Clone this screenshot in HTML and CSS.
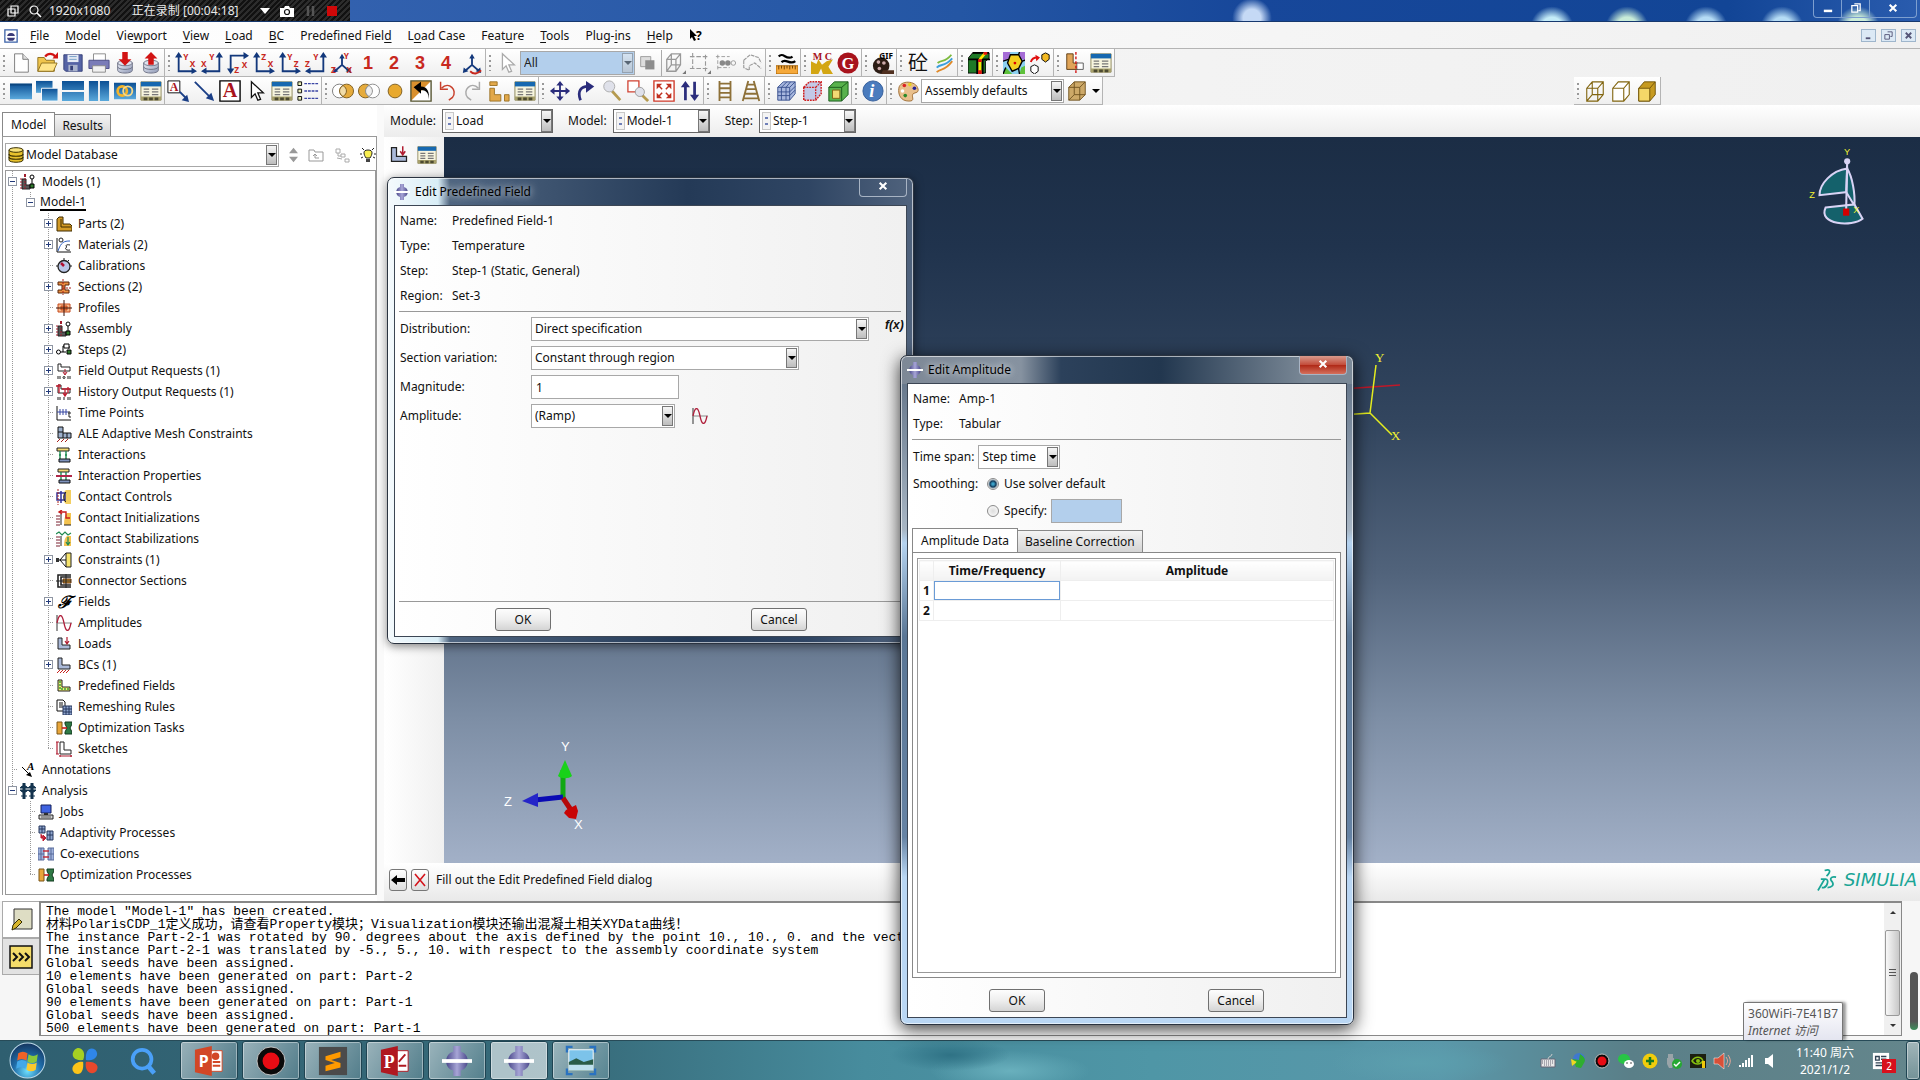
FILE: index.html
```html
<!DOCTYPE html>
<html lang="en">
<head>
  <meta charset="UTF-8">
  <title>Edit Amplitude - Model-1</title>
  <meta name="viewport" content="width=device-width, initial-scale=1.0">
  <link rel="stylesheet" href="styles.css">
</head>
<body>

  <!-- icon sprite -->
  <svg class="sprite" aria-hidden="true">
    <defs>
      <linearGradient id="g-blue" x1="0" y1="0" x2="0" y2="1"><stop offset="0" stop-color="#0b4f94"/><stop offset="1" stop-color="#5aa9dc"/></linearGradient>
      <linearGradient id="g-gold" x1="0" y1="0" x2="1" y2="1"><stop offset="0" stop-color="#fff0a0"/><stop offset="1" stop-color="#c89a1c"/></linearGradient>
      <linearGradient id="g-steel" x1="0" y1="0" x2="1" y2="1"><stop offset="0" stop-color="#eef1f8"/><stop offset="1" stop-color="#8c96b4"/></linearGradient>
      <linearGradient id="g-violet" x1="0" y1="0" x2="1" y2="0"><stop offset="0" stop-color="#4c4a8c"/><stop offset=".5" stop-color="#a7a5d6"/><stop offset="1" stop-color="#4c4a8c"/></linearGradient>
      <radialGradient id="g-orb" cx=".5" cy=".8" r=".8"><stop offset="0" stop-color="#6ee0ff"/><stop offset=".5" stop-color="#1f6ca8"/><stop offset="1" stop-color="#15355e"/></radialGradient>
    </defs>

    <!-- toolbar, row one -->
    <symbol id="i-new" viewBox="0 0 24 24"><path d="M5 2h9l6 6v14H5z" fill="#fff" stroke="#777"/><path d="M14 2v6h6" fill="#ddd" stroke="#777"/></symbol>
    <symbol id="i-open" viewBox="0 0 24 24"><path d="M2 21V6h7l2 3h9v12z" fill="#f0c54c" stroke="#8c6d1d"/><path d="M2 21l4-9h17l-4 9z" fill="#ffe58a" stroke="#8c6d1d"/><path d="M10 5c3-4 8-4 11 0" fill="none" stroke="#d21414" stroke-width="2.5"/><path d="M18 7h6V0z" fill="#d21414"/></symbol>
    <symbol id="i-save" viewBox="0 0 24 24"><path d="M2 3h20v18H4l-2-2z" fill="#5563a5" stroke="#343f78"/><path d="M6 3h12v8H6z" fill="#e6ebf5"/><path d="M8 5h8M8 8h8" stroke="#6d9ac4"/><path d="M7 14h10v7H7z" fill="#aab3cc"/><path d="M9 15h3v5H9z" fill="#343f78"/></symbol>
    <symbol id="i-print" viewBox="0 0 24 24"><path d="M6 2h13v8H6z" fill="#fff" stroke="#888"/><path d="M1 9h22v9H1z" fill="#7a7cb8" stroke="#494b86"/><path d="M5 15h14v7H5z" fill="#f1f1f1" stroke="#888"/></symbol>
    <symbol id="i-db-in" viewBox="0 0 24 24"><path d="M4 12v8c0 4 16 4 16 0v-8z" fill="url(#g-steel)" stroke="#6d7285"/><ellipse cx="12" cy="12" rx="8" ry="3" fill="#dfe3ee" stroke="#6d7285"/><path d="M4 16c0 4 16 4 16 0" fill="none" stroke="#6d7285"/><path d="M9 0h6v8h4l-7 7-7-7h4z" fill="#d21414"/></symbol>
    <symbol id="i-db-out" viewBox="0 0 24 24"><path d="M4 12v8c0 4 16 4 16 0v-8z" fill="url(#g-steel)" stroke="#6d7285"/><ellipse cx="12" cy="12" rx="8" ry="3" fill="#dfe3ee" stroke="#6d7285"/><path d="M4 16c0 4 16 4 16 0" fill="none" stroke="#6d7285"/><path d="M9 14h6V7h4l-7-7-7 7h4z" fill="#d21414"/></symbol>
    <symbol id="i-axis-l" viewBox="0 0 24 24"><path d="M4 3v18h16" fill="none" stroke="#13387c" stroke-width="2"/><path d="M0 6l4-6 4 6zM18 17l6 4-6 3z" fill="#13387c"/></symbol>
    <symbol id="i-axis-r" viewBox="0 0 24 24"><path d="M20 3v18H4" fill="none" stroke="#13387c" stroke-width="2"/><path d="M16 6l4-6 4 6zM6 17l-6 4 6 3z" fill="#13387c"/></symbol>
    <symbol id="i-axis-t" viewBox="0 0 24 24"><path d="M4 21V4h16" fill="none" stroke="#13387c" stroke-width="2"/><path d="M0 18l4 6 4-6zM18 0l6 4-6 4z" fill="#13387c"/></symbol>
    <symbol id="i-iso" viewBox="0 0 24 24"><path d="M12 5v9l-8 7M12 14l8 7" fill="none" stroke="#13387c" stroke-width="2"/><path d="M9 7l3-5 3 5zM3 17l-1 6 6-2zM21 17l1 6-6-2z" fill="#13387c"/></symbol>
    <symbol id="i-arrow" viewBox="0 0 24 24"><path d="M7 2v17l4-4 3 7 3-1-3-7h6z" fill="#fff" stroke="currentColor" stroke-width="1.4"/></symbol>
    <symbol id="i-overlap" viewBox="0 0 24 24"><path d="M4 5h11v11H4z" fill="#ddd" stroke="#999"/><path d="M9 9h10v10H9z" fill="#8d8d8d"/></symbol>
    <symbol id="i-greycube" viewBox="0 0 24 24"><path d="M3 8l5-6h10v12l-5 7H3zM3 8h10v13M13 8l5-6M8 2v12h10M3 21l5-7" fill="none" stroke="#999" stroke-width="1.4"/><path d="M24 24h-4l4-4z" fill="#777"/></symbol>
    <symbol id="i-region" viewBox="0 0 24 24"><path d="M1 5h19M4 1v17M1 18h19M18 3v18" fill="none" stroke="#999" stroke-width="1.2" stroke-dasharray="5 2"/><path d="M24 24h-4l4-4z" fill="#777"/></symbol>
    <symbol id="i-filter" viewBox="0 0 24 24"><path d="M3 3v17M1 5h15M3 17h13" stroke="#999" stroke-dasharray="4 2"/><circle cx="8" cy="12" r="3" fill="#888"/><circle cx="14" cy="12" r="3" fill="#888"/><circle cx="20" cy="12" r="2.5" fill="none" stroke="#999"/></symbol>
    <symbol id="i-poly" viewBox="0 0 24 24"><path d="M3 9l7-6 9 3 3 6M3 9v8l6 3v-5l6-3 7 6" fill="none" stroke="#999" stroke-width="1.2" stroke-dasharray="4 1"/></symbol>
    <symbol id="i-ruler" viewBox="0 0 24 24"><path d="M0 15h24v9H0z" fill="#f5a93b" stroke="#a55f00"/><path d="M3 15v4M6 15v3M9 15v4M12 15v3M15 15v4M18 15v3M21 15v4" stroke="#6b3c00"/><path d="M3 5c5-6 8 5 15 0M6 11c5-5 9 4 15-1" fill="none" stroke="#000" stroke-width="2.5"/></symbol>
    <symbol id="i-mc" viewBox="0 0 24 24"><path d="M0 10l6 3 2-5 4 6 5-4 7-2-5 8 5 8H13l-2-6-3 6H0z" fill="#d3a613"/></symbol>
    <symbol id="i-disc" viewBox="0 0 24 24"><circle cx="12" cy="12" r="11.5" fill="#a8131c"/></symbol>
    <symbol id="i-gif" viewBox="0 0 24 24"><circle cx="10" cy="15" r="9" fill="#2c1c14"/><circle cx="7" cy="11" r="2" fill="#caa"/><circle cx="13" cy="12" r="2" fill="#caa"/><circle cx="8" cy="18" r="2" fill="#caa"/><path d="M12 20h12v4H10z" fill="#503020"/></symbol>
    <symbol id="i-curves" viewBox="0 0 24 24"><path d="M4 22C9 17 12 22 21 10" fill="none" stroke="#e08a2a" stroke-width="2"/><path d="M4 17c5-5 8 0 17-10" fill="none" stroke="#3c9fdc" stroke-width="2"/><path d="M5 12c5-4 8 0 15-9" fill="none" stroke="#7cba3d" stroke-width="2"/></symbol>
    <symbol id="i-beam" viewBox="0 0 24 24"><path d="M0 7l5-6h18v6l-4 3v13H0z" fill="#1f7a26" stroke="#000"/><path d="M0 8h24M5 1h18M10 8v16M16 8v16" stroke="#000" stroke-width="2"/><path d="M13 8v16M13 8l6-7" stroke="#ffe400" stroke-width="3"/><path d="M11 8h4v3h-4zM17 0h4v3h-4zM11 20h4v4h-4z" fill="#e01010"/></symbol>
    <symbol id="i-voronoi" viewBox="0 0 24 24"><path d="M0 0h24v24H0z" fill="#8cd0f0"/><path d="M0 0h8L6 8 0 10zM18 0h6v9l-5-2z" fill="#a56cd6"/><path d="M0 24l3-7 7 7zM18 24l2-7 4-2v9z" fill="#5ec13b"/><path d="M0 10l6-2M3 17l-3 7M18 0l-1 3M21 10l3-1M17 18l1 6" stroke="#000" stroke-width="1.5"/><path d="M8 3h9l4 7-4 8-7 3-5-9z" fill="#f3cf21" stroke="#000" stroke-width="1.5"/><circle cx="13" cy="12" r="1.5" fill="#d00"/></symbol>
    <symbol id="i-hexes" viewBox="0 0 24 24"><path d="M14 3l4-2 4 2v5l-4 3-4-3z" fill="#f3b921" stroke="#000"/><path d="M2 16l4-2 4 2v5l-4 3-4-3z" fill="#fff" stroke="#000"/><path d="M2 11c1-4 3-5 7-5" fill="none" stroke="#e01010" stroke-width="2"/><path d="M7 3l5 3-4 4z" fill="#e01010"/></symbol>
    <symbol id="i-bracket" viewBox="0 0 24 24"><path d="M3 2h7v10h5v7H3z" fill="#e0a458" stroke="#5b3a10"/><path d="M14 12h7v7h-7z" fill="#fff" stroke="#555"/><path d="M13 0v24" stroke="#d21414" stroke-width="1.5" stroke-dasharray="3 2"/></symbol>
    <symbol id="i-table" viewBox="0 0 24 24"><path d="M1 2h22v20H1z" fill="#f7f5df" stroke="#8a8458"/><path d="M1 2h22v5H1z" fill="#1668b0"/><path d="M4 10h6M4 13h6M4 16h6M13 10h7M13 13h7M13 16h7" stroke="#777" stroke-width="1.5"/><path d="M1 18h22v4H1z" fill="#a7a06b"/><path d="M4 19h4v3H4zM10 19h4v3h-4zM16 19h4v3h-4z" fill="#4c4a30"/></symbol>

    <!-- toolbar, row two -->
    <symbol id="i-win" viewBox="0 0 24 24"><path d="M0 4h24v17H0z" fill="url(#g-blue)"/><path d="M0 4h24v2H0z" fill="#0a457f"/></symbol>
    <symbol id="i-cascade" viewBox="0 0 24 24"><path d="M0 1h18v13H0z" fill="url(#g-blue)"/><path d="M6 9h18v14H6z" fill="url(#g-blue)" stroke="#fff"/></symbol>
    <symbol id="i-tile-h" viewBox="0 0 24 24"><path d="M0 1h24v10H0zM0 13h24v10H0z" fill="url(#g-blue)"/></symbol>
    <symbol id="i-tile-v" viewBox="0 0 24 24"><path d="M1 1h10v22H1zM13 1h10v22H13z" fill="url(#g-blue)"/></symbol>
    <symbol id="i-link" viewBox="0 0 24 24"><path d="M0 3h24v18H0z" fill="url(#g-blue)"/><circle cx="9" cy="12" r="5" fill="none" stroke="#f5b52a" stroke-width="3"/><circle cx="15" cy="12" r="5" fill="none" stroke="#f5d88a" stroke-width="2"/></symbol>
    <symbol id="i-note" viewBox="0 0 24 24"><path d="M1 1h13v13H1z" fill="#fff" stroke="#000"/><path d="M14 13l8 8" stroke="#1a3e86" stroke-width="2"/><path d="M24 24l-8-2 6-6z" fill="#1a3e86"/></symbol>
    <symbol id="i-line" viewBox="0 0 24 24"><path d="M2 2l18 18" stroke="#1a3e86" stroke-width="2"/><path d="M23 23l-9-3 6-6z" fill="#1a3e86"/></symbol>
    <symbol id="i-box" viewBox="0 0 24 24"><path d="M1 1h22v22H1z" fill="#fff" stroke="#000" stroke-width="1.5"/></symbol>
    <symbol id="i-list" viewBox="0 0 24 24"><path d="M1 2h4v4H1zM1 10h4v4H1zM1 18h4v4H1z" fill="#e8ecb4" stroke="#000"/><path d="M8 4h15M8 12h15M8 20h15" stroke="#3b46a5" stroke-width="1.5" stroke-dasharray="3 1"/></symbol>
    <symbol id="i-and" viewBox="0 0 24 24"><circle cx="8" cy="12" r="7.5" fill="#fff" stroke="#777"/><circle cx="16" cy="12" r="7.5" fill="#e5ab3c" stroke="#7a5a1c"/><path d="M12 6c-5 3-5 9 0 12 5-3 5-9 0-12z" fill="#f1dca8" stroke="#7a5a1c"/></symbol>
    <symbol id="i-or" viewBox="0 0 24 24"><circle cx="8" cy="12" r="7.5" fill="#e5ab3c" stroke="#7a5a1c"/><circle cx="16" cy="12" r="7.5" fill="#fff" stroke="#888"/><path d="M12 6c-5 3-5 9 0 12 5-3 5-9 0-12z" fill="#eee" stroke="#888"/></symbol>
    <symbol id="i-dot" viewBox="0 0 24 24"><circle cx="12" cy="12" r="7.5" fill="#e8a92e" stroke="#7a5a1c"/></symbol>
    <symbol id="i-replace" viewBox="0 0 24 24"><path d="M1 1h22v22H1z" fill="#d9902e"/><path d="M1 23h22V1z" fill="#fff"/><path d="M1 1h22v22H1z" fill="none" stroke="#553" stroke-width="1.5"/><path d="M20 21c1-7-3-10-8-10v4L4 8l8-6v5c7 0 10 7 8 14z" fill="#000"/></symbol>
    <symbol id="i-undo" viewBox="0 0 24 24"><path d="M6 9c8-8 18 2 12 10l-4 3" fill="none" stroke="currentColor" stroke-width="1.6"/><path d="M5 2v8h8" fill="none" stroke="currentColor" stroke-width="1.6"/></symbol>
    <symbol id="i-redo" viewBox="0 0 24 24"><path d="M18 9C10 1 0 11 6 19l4 3" fill="none" stroke="currentColor" stroke-width="1.6"/><path d="M19 2v8h-8" fill="none" stroke="currentColor" stroke-width="1.6"/></symbol>
    <symbol id="i-parts" viewBox="0 0 24 24"><path d="M2 2h8v4H2zM2 9h5v7h7v7H2zM18 16h5v7h-5z" fill="#e2a84a" stroke="#9a7224"/></symbol>
    <symbol id="i-pan" viewBox="0 0 24 24"><path d="M12 3v18M3 12h18" stroke="#2b2d7c" stroke-width="2"/><path d="M8 6l4-5 4 5zM8 18l4 5 4-5zM6 8l-5 4 5 4zM18 8l5 4-5 4z" fill="#2b2d7c"/></symbol>
    <symbol id="i-rotate" viewBox="0 0 24 24"><path d="M6 22C2 12 7 7 14 7" fill="none" stroke="#2b2d7c" stroke-width="3"/><path d="M12 1l9 6-9 7z" fill="#2b2d7c"/></symbol>
    <symbol id="i-zoom" viewBox="0 0 24 24"><path d="M12 12l9 10" stroke="#b59a4f" stroke-width="3"/><circle cx="9" cy="7" r="6" fill="#dfe1ea" stroke="#aaa"/></symbol>
    <symbol id="i-zoombox" viewBox="0 0 24 24"><path d="M1 1h12v12H1z" fill="#fff" stroke="#d04030" stroke-width="1.4"/><path d="M16 16l7 7" stroke="#b59a4f" stroke-width="3"/><circle cx="14" cy="13" r="5" fill="#dfe1ea" stroke="#999"/></symbol>
    <symbol id="i-fit" viewBox="0 0 24 24"><path d="M1 1h22v22H1z" fill="#fff" stroke="#d03a2a" stroke-width="1.5"/><path d="M4 4h6L4 10zM20 4v6l-6-6zM4 20v-6l6 6zM20 20h-6l6-6z" fill="#c03020"/><path d="M5 5l5 5M19 5l-5 5M5 19l5-5M19 19l-5-5" stroke="#c03020" stroke-width="1.6"/></symbol>
    <symbol id="i-updown" viewBox="0 0 24 24"><path d="M7 22V5M17 2v17" stroke="#2b2d7c" stroke-width="3"/><path d="M2 8l5-7 5 7zM12 16l5 7 5-7z" fill="#2b2d7c"/></symbol>
    <symbol id="i-ladder" viewBox="0 0 24 24"><path d="M6 1v22M18 1v22M6 4h12M6 9h12M6 14h12M6 19h12" stroke="#8d7038" stroke-width="2"/></symbol>
    <symbol id="i-persp" viewBox="0 0 24 24"><path d="M9 1L3 23M15 1l6 22M8 5h8M7 10h10M6 15h12M4 20h16" stroke="#8d7038" stroke-width="2"/></symbol>
    <symbol id="i-mesh" viewBox="0 0 24 24"><path d="M3 8l6-6h13v13l-6 7H3z" fill="#a7b7de" stroke="#38508e"/><path d="M3 8h13v14M16 8l6-6M3 13h13l6-6M3 17h13l6-6M7 8v14M12 8v14M7 8l6-6M12 8l5-6" fill="none" stroke="#38508e"/></symbol>
    <symbol id="i-edges" viewBox="0 0 24 24"><path d="M3 8l6-6h13v13l-6 7H3z" fill="#c3c8e6" stroke="#d02020" stroke-width="1.6" stroke-dasharray="2 1"/><path d="M3 8h13v14M16 8l6-6" fill="none" stroke="#d02020" stroke-width="1.4" stroke-dasharray="2 1"/></symbol>
    <symbol id="i-faces" viewBox="0 0 24 24"><path d="M2 8l6-6h15v14l-7 7H2z" fill="#58b24c" stroke="#17591a"/><path d="M2 8h14v15M16 8l7-6" fill="none" stroke="#17591a"/><path d="M6 11h8v9H6z" fill="#f3d974" stroke="#806010"/></symbol>
    <symbol id="i-info" viewBox="0 0 24 24"><circle cx="12" cy="12" r="11" fill="#4a7bbd" stroke="#315b98"/></symbol>
    <symbol id="i-palette" viewBox="0 0 24 24"><path d="M2 9C3 0 21 0 23 10c1 5-5 3-6 6s3 7-4 7C4 23 1 16 2 9z" fill="#e8bf8c" stroke="#9c6a30"/><circle cx="8" cy="6" r="2" fill="#d22"/><circle cx="14" cy="5" r="2" fill="#e8d020"/><circle cx="19" cy="9" r="2" fill="#229"/><circle cx="6" cy="12" r="2" fill="#fff"/><circle cx="9" cy="17" r="2" fill="#2a8a2a"/></symbol>
    <symbol id="i-cube" viewBox="0 0 24 24"><path d="M3 8l6-6h12v14l-6 6H3z" fill="#cda968" stroke="#6e5220"/><path d="M3 8h12v14M15 8l6-6M9 2v14h12M3 22l6-6" fill="none" stroke="#6e5220"/></symbol>
    <symbol id="i-wire" viewBox="0 0 24 24"><path d="M3 9l6-7h12v14l-6 7H3zM3 9h12v14M15 9l6-7M9 2v14h12M3 23l6-7" fill="none" stroke="#80640e" stroke-width="1.2"/></symbol>
    <symbol id="i-hidden" viewBox="0 0 24 24"><path d="M3 9l6-7h12v14l-6 7H3zM3 9h12v14M15 9l6-7" fill="#fff" stroke="#80640e" stroke-width="1.2"/></symbol>
    <symbol id="i-shaded" viewBox="0 0 24 24"><path d="M3 9l6-7h12v14l-6 7H3z" fill="#c69a20" stroke="#6e5208"/><path d="M3 9h12v14H3z" fill="#f4d768" stroke="#6e5208"/><path d="M15 9l6-7" stroke="#6e5208"/></symbol>

    <!-- model tree -->
    <symbol id="t-db" viewBox="0 0 16 16"><path d="M1 3v10c0 3 14 3 14 0V3z" fill="#e8c22c" stroke="#3a3000"/><ellipse cx="8" cy="3" rx="7" ry="2.3" fill="#f7e27a" stroke="#3a3000"/><path d="M1 7c0 3 14 3 14 0M1 10c0 3 14 3 14 0" fill="none" stroke="#3a3000" stroke-width="1.2"/></symbol>
    <symbol id="t-models" viewBox="0 0 16 16"><path d="M2 5h4v6h4v4H2z" fill="#555" stroke="#222"/><path d="M5 1v14M1 4v11" stroke="#a11c2c" stroke-dasharray="2 1"/><path d="M4 0h2v3H4z" fill="#a11c2c"/><circle cx="12" cy="3" r="2" fill="#fff" stroke="#000"/><path d="M12 5v5" stroke="#000"/><path d="M10 10h4v4h-4z" fill="#2f7a2c" stroke="#000"/></symbol>
    <symbol id="t-part" viewBox="0 0 16 16"><path d="M1 3l2-2h4v7h7l2 2v5H1z" fill="#d29a26" stroke="#3f2b00"/><path d="M5 3v8h10" fill="none" stroke="#3f2b00"/></symbol>
    <symbol id="t-mat" viewBox="0 0 16 16"><path d="M1 1v14h14" fill="none" stroke="#111"/><path d="M2 14C5 5 8 4 14 4" fill="none" stroke="#3060c0"/><circle cx="5" cy="3" r="2" fill="none" stroke="#222"/><path d="M14 8c-4-1-5 1-3 2-3 1-1 4 3 3" fill="none" stroke="#222"/></symbol>
    <symbol id="t-cal" viewBox="0 0 16 16"><circle cx="8" cy="8.500" r="6" fill="#b9c6e6" stroke="#222" stroke-width="1.3"/><path d="M8 8L5 5" stroke="#b01030" stroke-width="2.5"/><path d="M8 0v3M0 8h2M14 8h2M13 2l-2 2" stroke="#222"/></symbol>
    <symbol id="t-sec" viewBox="0 0 16 16"><path d="M2 3h11v3H9v5h4v3H2v-3h4V6H2z" fill="#eb9040" stroke="#59250a"/><path d="M7 0v16M7 9h8" stroke="#a8201c" stroke-dasharray="2 1"/></symbol>
    <symbol id="t-prof" viewBox="0 0 16 16"><path d="M2 4h12v8H2z" fill="#f7b88a" stroke="#c64a1c"/><path d="M5 6h6v4H5z" fill="#ee7a42" stroke="#c64a1c"/><path d="M8 0v16M0 8h16" stroke="#3a1208"/></symbol>
    <symbol id="t-steps" viewBox="0 0 16 16"><circle cx="2.500" cy="10" r="2" fill="#fff" stroke="#000"/><path d="M5 10h2V4h6v3M7 10h3" fill="none" stroke="#000"/><path d="M8 2h5v4H8z" fill="#fff" stroke="#000"/><path d="M11 8h4v4h-4z" fill="#2f7a2c" stroke="#000"/></symbol>
    <symbol id="t-out" viewBox="0 0 16 16"><path d="M2 1h3v3h9v4H2z" fill="#fff" stroke="#222"/><path d="M9 6v5M7 9l2 3 2-3" fill="none" stroke="#b01c30"/><path d="M2 13v3M4 13v3M12 13v3M14 13v3" stroke="#222"/><circle cx="8" cy="14.500" r="1" fill="none" stroke="#222"/></symbol>
    <symbol id="t-hist" viewBox="0 0 16 16"><path d="M2 1h3v4h9v4H2z" fill="#fff" stroke="#222"/><path d="M0 2h5M3 0v9M6 5h9M12 3v6M9 6v6M7 9l2 3 2-3" fill="none" stroke="#c01c30" stroke-width="1.3"/><path d="M2 13v3M4 13v3M12 13v3M14 13v3M8 13v3" stroke="#222"/></symbol>
    <symbol id="t-time" viewBox="0 0 16 16"><path d="M1 1v14h14" fill="none" stroke="#111"/><path d="M1 7h11M4 4v6M7 4v6M10 4v6" stroke="#3544a0"/><path d="M13 6v6h2M12 8h3" fill="none" stroke="#222"/></symbol>
    <symbol id="t-ale" viewBox="0 0 16 16"><path d="M2 1h5v6h8v5H2z" fill="#9db0cc" stroke="#111"/><path d="M2 6h5M7 7v5M11 7v5" stroke="#111"/><path d="M1 16l3-3M5 16l3-3M9 16l3-3" stroke="#a8201c"/></symbol>
    <symbol id="t-int" viewBox="0 0 16 16"><path d="M1 1h12v3H1z" fill="#f3d974" stroke="#222"/><path d="M4 4v8M10 4v8M3 8h2M9 8h2" stroke="#1f8a50" stroke-width="1.4"/><path d="M3 12h11v3H3z" fill="#7f93bd" stroke="#111"/></symbol>
    <symbol id="t-intp" viewBox="0 0 16 16"><path d="M2 1h11v3H2z" fill="#f3d974" stroke="#222"/><path d="M5 4v8M10 4v8" stroke="#1f8a50" stroke-width="1.4"/><path d="M3 12h11v3H3z" fill="#7f93bd" stroke="#111"/><path d="M0 8h16" stroke="#b02848" stroke-width="2"/></symbol>
    <symbol id="t-cc" viewBox="0 0 16 16"><path d="M10 1h5v14h-5c-4-3-4-11 0-14z" fill="#f3cf60"/><path d="M1 4h8v7H1zM5 2v12" fill="none" stroke="#33349a" stroke-width="1.5"/><path d="M2 0v16" stroke="#a8201c" stroke-dasharray="2 1"/><path d="M10 3c-3 3-3 8 0 10" fill="none" stroke="#222"/></symbol>
    <symbol id="t-ci" viewBox="0 0 16 16"><path d="M11 3h4v12H8c0-6 1-10 3-12z" fill="#f3c350"/><path d="M1 5v11M3 5v11" stroke="#7a2030" stroke-dasharray="2 1"/><path d="M5 4v11M15 15H8" stroke="#222"/><path d="M4 2h6v6h4M6 0L3 2l3 2" fill="none" stroke="#c81c1c" stroke-width="1.4"/></symbol>
    <symbol id="t-cs" viewBox="0 0 16 16"><path d="M11 5h4v10H8c0-6 1-8 3-10z" fill="#f3c350"/><path d="M1 5v11M3 5v11" stroke="#7a2030" stroke-dasharray="2 1"/><path d="M5 5v10" stroke="#222"/><path d="M0 3l3-2 3 3 3-3 3 3 3-2M12 6v8M10 11l2 3 2-3" fill="none" stroke="#1f8a50" stroke-width="1.2"/></symbol>
    <symbol id="t-con" viewBox="0 0 16 16"><path d="M10 1h5v14h-5z" fill="#f5e36c" stroke="#222"/><path d="M10 1L4 8l6 7M2 8h8" fill="none" stroke="#111"/><path d="M0 6h3v4H0z" fill="#333"/></symbol>
    <symbol id="t-conn" viewBox="0 0 16 16"><path d="M15 2H2v12h13M15 4H5v8h10" fill="none" stroke="#222" stroke-width="1.6"/><path d="M7 6h8v4H7z" fill="#d89a30" stroke="#5b2d08"/><path d="M10 1v14M0 8h15" stroke="#222"/></symbol>
    <symbol id="t-amp" viewBox="0 0 16 16"><path d="M1 0v16" stroke="#333"/><path d="M1 8h15" stroke="#888"/><path d="M1 8C3-2 6-2 8 8s5 10 7 0" fill="none" stroke="#b0203c" stroke-width="1.3"/></symbol>
    <symbol id="t-load" viewBox="0 0 16 16"><path d="M2 2h4v7h8v4H2z" fill="#aab9d8" stroke="#222"/><path d="M11 1v7M9 5l2 3 2-3" fill="none" stroke="#b01c30" stroke-width="1.2"/></symbol>
    <symbol id="t-bc" viewBox="0 0 16 16"><path d="M2 1h4v7h8v4H2z" fill="#aab9d8" stroke="#222"/><path d="M1 16l3-3M4 16l3-3M7 16l3-3M10 16l3-3" stroke="#c8201c"/></symbol>
    <symbol id="t-pre" viewBox="0 0 16 16"><path d="M2 2h4v7h8v4H2z" fill="#f4ee74" stroke="#222"/><path d="M4 3v8h9" fill="none" stroke="#39a03c" stroke-width="1.5" stroke-dasharray="2 1"/></symbol>
    <symbol id="t-rem" viewBox="0 0 16 16"><path d="M1 1h6l2 2v9H1z" fill="#fff" stroke="#111"/><path d="M3 4h4M3 6h4M3 8h4" stroke="#111"/><path d="M7 7h9v9H7z" fill="#8fa6cf" stroke="#26365c"/><path d="M7 10h9M7 13h9M10 7v9M13 7v9" stroke="#26365c"/></symbol>
    <symbol id="t-opt" viewBox="0 0 16 16"><path d="M1 2h5v12H1z" fill="#e9a63a" stroke="#7a5618"/><path d="M9 2h7v2l-2 4 2 4v2H9v-2l2-4-2-4z" fill="#2f7a46" stroke="#123a1e"/><path d="M6 8h5" stroke="#c81c1c" stroke-width="1.6"/></symbol>
    <symbol id="t-sk" viewBox="0 0 16 16"><path d="M4 1h4v8h7v4H4z" fill="#fff" stroke="#222"/><path d="M1 1v12M0 1h3M0 13h3M4 15h12M4 14v2M15 14v2" stroke="#b01c30" stroke-width="1.2"/></symbol>
    <symbol id="t-note" viewBox="0 0 16 16"><path d="M2 5l8 8" stroke="#000"/><path d="M12 15l-6-2 4-3z" fill="#000"/></symbol>
    <symbol id="t-ana" viewBox="0 0 16 16"><path d="M4 0v16M12 0v16" stroke="#14344e" stroke-width="3"/><path d="M0 5c2-3 6-3 8 0zM0 7h8c-2 3-6 3-8 0zM8 5c2-3 6-3 8 0zM8 7h8c-2 3-6 3-8 0zM1 13h6M9 13h6" fill="#14344e" stroke="#14344e"/></symbol>
    <symbol id="t-job" viewBox="0 0 16 16"><path d="M3 1h10v8H3z" fill="#3f63e0" stroke="#14205a"/><path d="M6 9h4v2H6z" fill="#333"/><path d="M1 11h14v4H1z" fill="#d5d5d5" stroke="#222"/><path d="M3 13h10" stroke="#555"/></symbol>
    <symbol id="t-adapt" viewBox="0 0 16 16"><path d="M1 1h6v7H1zM9 6h6v9H9z" fill="#8fa6cf" stroke="#26365c"/><path d="M4 1v7M1 4h6M12 6v9M9 10h6" stroke="#26365c"/><path d="M3 9v4h3M5 10l3 3-3 3z" fill="#c01c30" stroke="#c01c30"/></symbol>
    <symbol id="t-coex" viewBox="0 0 16 16"><path d="M0 2h6v12H0zM10 2h6v12h-6z" fill="#9fb2dc" stroke="#586a9a"/><path d="M3 2v12M13 2v12M0 8h6M10 8h6" stroke="#586a9a"/><path d="M5 5h6M5 11h6" stroke="#c03040" stroke-width="1.4"/></symbol>
    <symbol id="t-bulb" viewBox="0 0 16 16"><path d="M8 3c-6 0-4 5-2 8h4c2-3 4-8-2-8z" fill="#f8ee50" stroke="#222"/><path d="M6 12h4v3H6z" fill="#444"/><path d="M0 7h2M14 7h2M2 1l2 2M14 1l-2 2M1 11l2-1M15 11l-2-1" stroke="#222"/></symbol>
    <symbol id="t-up" viewBox="0 0 16 16"><path d="M1 3h5l1 2h8v9H1z" fill="none" stroke="#999"/><path d="M11 11H7V7M5 9l2-2 2 2" fill="none" stroke="#999"/></symbol>
    <symbol id="t-expand" viewBox="0 0 16 16"><path d="M2 2h4v4H2zM7 7h4v3H7zM11 12h4v3h-4zM4 6v3h3M3 11l5 1" fill="none" stroke="#aaa"/></symbol>
    <symbol id="t-app" viewBox="0 0 16 16"><path d="M6 0h4v3c5 1 5 9 0 10v3H6v-3C1 12 1 4 6 3z" fill="url(#g-violet)"/><path d="M0 7h16v2H0z" fill="#fff"/></symbol>
  </svg>

  <header class="title-bar">
    <div class="recorder">
      <svg class="rec-icon" viewBox="0 0 12 12"><path d="M1 4h7v7H1zM4 1h7v7H4z" fill="none" stroke="#fff" stroke-width="1.2"/></svg>
      <svg class="rec-icon" viewBox="0 0 12 12"><circle cx="5" cy="5" r="4" fill="none" stroke="#fff" stroke-width="1.2"/><path d="M8 8l4 4" stroke="#fff" stroke-width="1.6"/></svg>
      <span>1920x1080</span>
      <span class="rec-state">正在录制 [00:04:18]</span>
      <svg class="rec-caret" viewBox="0 0 10 6"><path d="M0 0h10L5 6z" fill="#fff"/></svg>
      <svg class="rec-cam" viewBox="0 0 14 12"><path d="M0 3h4l1-2h4l1 2h4v9H0z" fill="#fff"/><circle cx="7" cy="7" r="2.500" fill="#fff" stroke="#111" stroke-width="1.2"/></svg>
      <svg class="rec-icon" viewBox="0 0 12 12"><path d="M4 1v10M9 1v10" stroke="#555" stroke-width="2.500"/></svg>
      <svg class="rec-icon" viewBox="0 0 12 12"><path d="M1 1h10v10H1z" fill="#d00808"/></svg>
    </div>
    <div class="win-buttons">
      <button aria-label="Minimize"><svg viewBox="0 0 12 12"><path d="M1 8h10v3H1z" fill="#fff"/></svg></button>
      <button aria-label="Restore"><svg viewBox="0 0 12 12"><path d="M4 1h7v8H9M1 3h7v8H1z" fill="none" stroke="#fff" stroke-width="1.5"/></svg></button>
      <button class="wide" aria-label="Close"><svg viewBox="0 0 12 12"><path d="M2 2l8 8M10 2l-8 8" stroke="#fff" stroke-width="2.500"/></svg></button>
    </div>
  </header>

  <nav class="menu-bar">
    <svg class="menu-logo" viewBox="0 0 16 16"><path d="M1 1h14v14H1z" fill="#fff" stroke="#3b62a8" stroke-width="1.5"/><circle cx="8" cy="9" r="4.500" fill="#3a3a78"/><path d="M2 8h12v2H2z" fill="#fff"/></svg>
    <a href="#"><u>F</u>ile</a>
    <a href="#"><u>M</u>odel</a>
    <a href="#">Vie<u>w</u>port</a>
    <a href="#"><u>V</u>iew</a>
    <a href="#"><u>L</u>oad</a>
    <a href="#"><u>B</u>C</a>
    <a href="#">Predefined Fiel<u>d</u></a>
    <a href="#">L<u>o</u>ad Case</a>
    <a href="#">Feat<u>u</u>re</a>
    <a href="#"><u>T</u>ools</a>
    <a href="#">Plug-<u>i</u>ns</a>
    <a href="#"><u>H</u>elp</a>
    <svg class="whats-this" viewBox="0 0 14 14"><path d="M1 0v10l2-2 2 4 2-1-2-4h3z" fill="#000"/><text x="7" y="11" font-size="12" font-weight="bold">?</text></svg>
    <div class="mdi-buttons">
      <button aria-label="Minimize view"><svg viewBox="0 0 12 12"><path d="M3 9h5" stroke="#557" stroke-width="2"/></svg></button>
      <button aria-label="Restore view"><svg viewBox="0 0 12 12"><path d="M5 2h5v5H8M2 5h5v5H2z" fill="none" stroke="#557"/></svg></button>
      <button aria-label="Close view"><svg viewBox="0 0 12 12"><path d="M3 3l6 6M9 3l-6 6" stroke="#557" stroke-width="2"/></svg></button>
    </div>
  </nav>

  <div class="toolbar">
    <div class="group">
      <button aria-label="New"><svg><use href="#i-new"/></svg></button>
      <button aria-label="Open"><svg><use href="#i-open"/></svg></button>
      <button aria-label="Save"><svg><use href="#i-save"/></svg></button>
      <button aria-label="Print"><svg><use href="#i-print"/></svg></button>
      <button aria-label="Import"><svg><use href="#i-db-in"/></svg></button>
      <button aria-label="Export"><svg><use href="#i-db-out"/></svg></button>
    </div>
    <div class="group axes">
      <button aria-label="Front view"><svg viewBox="0 0 24 24"><use href="#i-axis-l"/><text x="9" y="9">Y</text><text x="16" y="16">X</text></svg></button>
      <button aria-label="Back view"><svg viewBox="0 0 24 24"><use href="#i-axis-r"/><text x="9" y="9">Y</text><text x="0" y="16">X</text></svg></button>
      <button aria-label="Top view"><svg viewBox="0 0 24 24"><use href="#i-axis-t"/><text x="16" y="17">X</text><text x="8" y="23">Z</text></svg></button>
      <button aria-label="Bottom view"><svg viewBox="0 0 24 24"><use href="#i-axis-l"/><text x="9" y="9">Z</text><text x="16" y="16">X</text></svg></button>
      <button aria-label="Left view"><svg viewBox="0 0 24 24"><use href="#i-axis-l"/><text x="9" y="9">Y</text><text x="16" y="16">Z</text></svg></button>
      <button aria-label="Right view"><svg viewBox="0 0 24 24"><use href="#i-axis-r"/><text x="9" y="9">Y</text><text x="0" y="16">Z</text></svg></button>
      <button aria-label="Iso view"><svg viewBox="0 0 24 24"><use href="#i-iso"/><text x="14" y="8">Y</text><text x="0" y="23">Z</text><text x="17" y="23">X</text></svg></button>
      <button class="digit">1</button>
      <button class="digit">2</button>
      <button class="digit">3</button>
      <button class="digit">4</button>
      <button aria-label="Save view"><svg viewBox="0 0 24 24"><use href="#i-iso"/><path d="M10 21c4 4 8 3 12-1" fill="none" stroke="#c8281e" stroke-width="2"/></svg></button>
    </div>
    <div class="group">
      <button class="faded" aria-label="Select"><svg><use href="#i-arrow"/></svg></button>
      <span class="combo combo-off"><select aria-label="Selection filter" disabled><option>All</option></select><i></i></span>
      <button aria-label="Overlap"><svg><use href="#i-overlap"/></svg></button>
      <button class="sep-left" aria-label="Select inside"><svg><use href="#i-greycube"/></svg></button>
      <button aria-label="Region"><svg><use href="#i-region"/></svg></button>
      <button aria-label="Filter"><svg><use href="#i-filter"/></svg></button>
      <button aria-label="Polygon"><svg><use href="#i-poly"/></svg></button>
    </div>
    <div class="group"><button aria-label="Measure"><svg><use href="#i-ruler"/></svg></button></div>
    <div class="group">
      <button aria-label="MC"><svg viewBox="0 0 24 24"><use href="#i-mc"/><text class="serif red" x="2" y="9" font-size="11">M C</text></svg></button>
      <button aria-label="G"><svg viewBox="0 0 24 24"><use href="#i-disc"/><text class="serif white" x="5" y="18" font-size="18">G</text></svg></button>
    </div>
    <div class="group"><button aria-label="GIF"><svg viewBox="0 0 24 24"><use href="#i-gif"/><text x="8" y="8" font-size="9" font-weight="bold">GIF</text></svg></button></div>
    <div class="group">
      <button class="hanzi">砼</button>
      <button aria-label="Curves"><svg><use href="#i-curves"/></svg></button>
    </div>
    <div class="group"><button aria-label="Rebar"><svg><use href="#i-beam"/></svg></button></div>
    <div class="group">
      <button aria-label="Voronoi"><svg><use href="#i-voronoi"/></svg></button>
      <button aria-label="Aggregate"><svg><use href="#i-hexes"/></svg></button>
    </div>
    <div class="group">
      <button aria-label="Bracket"><svg><use href="#i-bracket"/></svg></button>
      <button aria-label="Table"><svg><use href="#i-table"/></svg></button>
    </div>
  </div>

  <div class="toolbar">
    <div class="group">
      <button aria-label="Single"><svg><use href="#i-win"/></svg></button>
      <button aria-label="Cascade"><svg><use href="#i-cascade"/></svg></button>
      <button aria-label="Tile rows"><svg><use href="#i-tile-h"/></svg></button>
      <button aria-label="Tile columns"><svg><use href="#i-tile-v"/></svg></button>
      <button aria-label="Link"><svg><use href="#i-link"/></svg></button>
      <button aria-label="Manager"><svg><use href="#i-table"/></svg></button>
    </div>
    <div class="group no-grip">
      <button aria-label="Callout"><svg viewBox="0 0 24 24"><use href="#i-note"/><text class="serif red" x="3" y="12" font-size="13">A</text></svg></button>
      <button aria-label="Arrow"><svg><use href="#i-line"/></svg></button>
      <button aria-label="Text"><svg viewBox="0 0 24 24"><use href="#i-box"/><text class="serif red" x="4" y="19" font-size="22">A</text></svg></button>
      <button aria-label="Pick"><svg><use href="#i-arrow"/></svg></button>
      <button aria-label="Annotation manager"><svg><use href="#i-table"/></svg></button>
      <button aria-label="List"><svg><use href="#i-list"/></svg></button>
    </div>
    <div class="group">
      <button aria-label="Intersect"><svg><use href="#i-and"/></svg></button>
      <button aria-label="Subtract"><svg><use href="#i-or"/></svg></button>
      <button aria-label="Only"><svg><use href="#i-dot"/></svg></button>
      <button aria-label="Replace"><svg><use href="#i-replace"/></svg></button>
      <button class="undo" aria-label="Undo"><svg><use href="#i-undo"/></svg></button>
      <button class="faded" aria-label="Redo"><svg><use href="#i-redo"/></svg></button>
      <button aria-label="Parts"><svg><use href="#i-parts"/></svg></button>
      <button aria-label="Group manager"><svg><use href="#i-table"/></svg></button>
    </div>
    <div class="group">
      <button aria-label="Pan"><svg><use href="#i-pan"/></svg></button>
      <button aria-label="Rotate"><svg><use href="#i-rotate"/></svg></button>
      <button aria-label="Zoom"><svg><use href="#i-zoom"/></svg></button>
      <button aria-label="Box zoom"><svg><use href="#i-zoombox"/></svg></button>
      <button aria-label="Fit"><svg><use href="#i-fit"/></svg></button>
      <button aria-label="Cycle"><svg><use href="#i-updown"/></svg></button>
    </div>
    <div class="group">
      <button aria-label="Parallel"><svg><use href="#i-ladder"/></svg></button>
      <button aria-label="Perspective"><svg><use href="#i-persp"/></svg></button>
    </div>
    <div class="group">
      <button aria-label="Mesh"><svg><use href="#i-mesh"/></svg></button>
      <button aria-label="Edges"><svg><use href="#i-edges"/></svg></button>
      <button aria-label="Faces"><svg><use href="#i-faces"/></svg></button>
    </div>
    <div class="group"><button aria-label="Query"><svg viewBox="0 0 24 24"><use href="#i-info"/><text class="serif white" x="8" y="19" font-size="20" font-style="italic">i</text></svg></button></div>
    <div class="group">
      <button aria-label="Colors"><svg><use href="#i-palette"/></svg></button>
      <span class="combo combo-color"><select aria-label="Color code"><option>Assembly defaults</option></select><i></i></span>
      <button aria-label="Cube"><svg><use href="#i-cube"/></svg></button>
      <button class="caret" aria-label="More"></button>
    </div>
    <div class="group render">
      <button aria-label="Wireframe"><svg><use href="#i-wire"/></svg></button>
      <button aria-label="Hidden"><svg><use href="#i-hidden"/></svg></button>
      <button aria-label="Shaded"><svg><use href="#i-shaded"/></svg></button>
    </div>
  </div>

  <main class="workspace">
    <aside class="side">
      <div class="tabs">
        <button class="tab active">Model</button>
        <button class="tab">Results</button>
      </div>
      <div class="side-panel">
        <div class="db-row">
          <span class="combo db"><svg class="ico"><use href="#t-db"/></svg><select aria-label="Database"><option>Model Database</option></select><i></i></span>
          <svg class="spin" viewBox="0 0 10 16"><path d="M5 0l5 6H0zM5 16l5-6H0z" fill="#999"/></svg>
          <svg class="ico"><use href="#t-up"/></svg>
          <svg class="ico"><use href="#t-expand"/></svg>
          <svg class="ico"><use href="#t-bulb"/></svg>
        </div>
        <div class="tree">
          <ul>
            <li>
              <div class="row"><b class="tog minus"></b><svg class="ico"><use href="#t-models"/></svg>Models (1)</div>
              <ul>
                <li>
                  <div class="row"><b class="tog minus"></b><span class="current">Model-1</span></div>
                  <ul>
                    <li><div class="row"><b class="tog"></b><svg class="ico"><use href="#t-part"/></svg>Parts (2)</div></li>
                    <li><div class="row"><b class="tog"></b><svg class="ico"><use href="#t-mat"/></svg>Materials (2)</div></li>
                    <li><div class="row"><b class="stub"></b><svg class="ico"><use href="#t-cal"/></svg>Calibrations</div></li>
                    <li><div class="row"><b class="tog"></b><svg class="ico"><use href="#t-sec"/></svg>Sections (2)</div></li>
                    <li><div class="row"><b class="stub"></b><svg class="ico"><use href="#t-prof"/></svg>Profiles</div></li>
                    <li><div class="row"><b class="tog"></b><svg class="ico"><use href="#t-models"/></svg>Assembly</div></li>
                    <li><div class="row"><b class="tog"></b><svg class="ico"><use href="#t-steps"/></svg>Steps (2)</div></li>
                    <li><div class="row"><b class="tog"></b><svg class="ico"><use href="#t-out"/></svg>Field Output Requests (1)</div></li>
                    <li><div class="row"><b class="tog"></b><svg class="ico"><use href="#t-hist"/></svg>History Output Requests (1)</div></li>
                    <li><div class="row"><b class="stub"></b><svg class="ico"><use href="#t-time"/></svg>Time Points</div></li>
                    <li><div class="row"><b class="stub"></b><svg class="ico"><use href="#t-ale"/></svg>ALE Adaptive Mesh Constraints</div></li>
                    <li><div class="row"><b class="stub"></b><svg class="ico"><use href="#t-int"/></svg>Interactions</div></li>
                    <li><div class="row"><b class="stub"></b><svg class="ico"><use href="#t-intp"/></svg>Interaction Properties</div></li>
                    <li><div class="row"><b class="stub"></b><svg class="ico"><use href="#t-cc"/></svg>Contact Controls</div></li>
                    <li><div class="row"><b class="stub"></b><svg class="ico"><use href="#t-ci"/></svg>Contact Initializations</div></li>
                    <li><div class="row"><b class="stub"></b><svg class="ico"><use href="#t-cs"/></svg>Contact Stabilizations</div></li>
                    <li><div class="row"><b class="tog"></b><svg class="ico"><use href="#t-con"/></svg>Constraints (1)</div></li>
                    <li><div class="row"><b class="stub"></b><svg class="ico"><use href="#t-conn"/></svg>Connector Sections</div></li>
                    <li><div class="row"><b class="tog"></b><svg class="ico" viewBox="0 0 16 16"><text class="serif" x="2" y="14" font-size="17" font-style="italic">ℱ</text></svg>Fields</div></li>
                    <li><div class="row"><b class="stub"></b><svg class="ico"><use href="#t-amp"/></svg>Amplitudes</div></li>
                    <li><div class="row"><b class="stub"></b><svg class="ico"><use href="#t-load"/></svg>Loads</div></li>
                    <li><div class="row"><b class="tog"></b><svg class="ico"><use href="#t-bc"/></svg>BCs (1)</div></li>
                    <li><div class="row"><b class="stub"></b><svg class="ico"><use href="#t-pre"/></svg>Predefined Fields</div></li>
                    <li><div class="row"><b class="stub"></b><svg class="ico"><use href="#t-rem"/></svg>Remeshing Rules</div></li>
                    <li><div class="row"><b class="stub"></b><svg class="ico"><use href="#t-opt"/></svg>Optimization Tasks</div></li>
                    <li><div class="row"><b class="stub"></b><svg class="ico"><use href="#t-sk"/></svg>Sketches</div></li>
                  </ul>
                </li>
              </ul>
            </li>
            <li><div class="row"><b class="stub"></b><svg class="ico" viewBox="0 0 16 16"><use href="#t-note"/><text class="serif" x="7" y="8" font-size="11" font-style="italic" font-weight="bold">A</text></svg>Annotations</div></li>
            <li>
              <div class="row"><b class="tog minus"></b><svg class="ico"><use href="#t-ana"/></svg>Analysis</div>
              <ul>
                <li><div class="row"><b class="stub"></b><svg class="ico"><use href="#t-job"/></svg>Jobs</div></li>
                <li><div class="row"><b class="stub"></b><svg class="ico"><use href="#t-adapt"/></svg>Adaptivity Processes</div></li>
                <li><div class="row"><b class="stub"></b><svg class="ico"><use href="#t-coex"/></svg>Co-executions</div></li>
                <li><div class="row"><b class="stub"></b><svg class="ico"><use href="#t-opt"/></svg>Optimization Processes</div></li>
              </ul>
            </li>
          </ul>
        </div>
      </div>
    </aside>

    <section class="canvas">
      <div class="module-bar">
        <label for="module">Module:</label>
        <span class="combo dark w-module"><em></em><select id="module"><option>Load</option></select><i></i></span>
        <label for="model">Model:</label>
        <span class="combo dark w-model"><em></em><select id="model"><option>Model-1</option></select><i></i></span>
        <label for="step">Step:</label>
        <span class="combo dark w-step"><em></em><select id="step"><option>Step-1</option></select><i></i></span>
      </div>
      <div class="stage">
        <div class="toolbox">
          <button aria-label="Create load"><svg><use href="#t-load"/></svg></button>
          <button aria-label="Load manager"><svg><use href="#i-table"/></svg></button>
        </div>
        <div class="viewport">
          <svg class="compass" viewBox="0 0 60 80">
            <path d="M37 21C22 23 10 36 10 47l27-3z" fill="#14616b" stroke="#d9d3f5" stroke-width="2"/>
            <path d="M37 21c5 8 8 25 7 36l-8-13z" fill="#14616b" stroke="#d9d3f5" stroke-width="2"/>
            <path d="M16 59l28-3 8 14c-10 8-44 6-36-11z" fill="#14616b" stroke="#d9d3f5" stroke-width="2"/>
            <path d="M37 14l-1 48" stroke="#d9d3f5" stroke-width="2"/>
            <circle cx="37" cy="14" r="3" fill="#d9d3f5"/>
            <path d="M33 60h6v7h-6z" fill="#d40000"/>
            <g fill="#f2f233" font-size="9"><text x="34" y="8">Y</text><text x="0" y="50">Z</text><text x="43" y="64">X</text></g>
          </svg>
          <svg class="axes-mark" viewBox="0 0 60 96">
            <path d="M0 40l58-4" stroke="#c01828" stroke-width="1.5"/>
            <path d="M34 16l-6 48L0 66M28 64l22 22" fill="none" stroke="#e6ee20" stroke-width="1.5"/>
            <g class="mark-names" fill="#f2f233" font-size="13"><text x="33" y="13">Y</text><text x="49" y="91">X</text></g>
          </svg>
          <svg class="triad" viewBox="0 0 90 96">
            <path d="M61 59V30" stroke="#12a812" stroke-width="5"/>
            <path d="M63 20l-7 16c3 3 11 3 14 0z" fill="#19d219"/>
            <path d="M61 57l-28 3" stroke="#0a0ab4" stroke-width="5"/>
            <path d="M20 61l16-8v14z" fill="#2525c8"/>
            <path d="M61 58l8 12" stroke="#b40808" stroke-width="5"/>
            <path d="M64 70l10-5 2 6-2 8-7-1-5-5z" fill="#c80404"/>
            <g fill="#fff" font-size="13"><text x="59" y="11">Y</text><text x="2" y="66">Z</text><text x="72" y="89">X</text></g>
          </svg>
        </div>
      </div>
      <div class="prompt-bar">
        <button aria-label="Back"><svg viewBox="0 0 14 14"><path d="M0 7l6-5v3h8v4H6v3z" fill="#000"/></svg></button>
        <button aria-label="Cancel step"><svg viewBox="0 0 14 14"><path d="M2 1l10 12M12 1L2 13" stroke="#d4141c" stroke-width="1.600"/></svg></button>
        <span>Fill out the Edit Predefined Field dialog</span>
        <div class="brand">
          <svg viewBox="0 0 22 24"><path d="M8 2c6-2 7 1 2 6M4 11h5c4 0 2 8-2 9H5M8 11L1 23M20 9c-6-1-7 2-4 5 2 3 0 6-5 6" fill="none" stroke="#1aa596" stroke-width="1.800"/></svg>
          <span>SIMULIA</span>
        </div>
      </div>
    </section>
  </main>

  <section class="messages">
    <div class="msg-tabs">
      <button class="active" aria-label="Messages"><svg viewBox="0 0 24 24"><path d="M5 1h18v20H5z" fill="#deddc4" stroke="#333"/><path d="M3 22l1-5 6-6 3 3-6 6z" fill="#d8b62c" stroke="#332a00"/></svg></button>
      <button aria-label="Command line"><svg viewBox="0 0 24 24"><path d="M1 1h22v22H1z" fill="#f4dc6a" stroke="#111" stroke-width="1.500"/><path d="M4 8l4 4-4 4M10 8l4 4-4 4M16 8l4 4-4 4" fill="none" stroke="#111" stroke-width="2"/></svg></button>
    </div>
    <div class="log">
      <p>The model "Model-1" has been created.</p>
      <p>材料PolarisCDP_1定义成功，请查看Property模块；Visualization模块还输出混凝土相关XYData曲线！</p>
      <p>The instance Part-2-1 was rotated by 90. degrees about the axis defined by the point 10., 10., 0. and the vector 0., 1., 0.</p>
      <p>The instance Part-2-1 was translated by -5., 5., 10. with respect to the assembly coordinate system</p>
      <p>Global seeds have been assigned.</p>
      <p>10 elements have been generated on part: Part-2</p>
      <p>Global seeds have been assigned.</p>
      <p>90 elements have been generated on part: Part-1</p>
      <p>Global seeds have been assigned.</p>
      <p>500 elements have been generated on part: Part-1</p>
    </div>
    <div class="scrollbar"><span class="up"></span><span class="thumb"></span><span class="down"></span></div>
    <div class="meter"></div>
    <div class="net-tip">360WiFi-7E41B7<br><i>Internet 访问</i></div>
  </section>

  <footer class="taskbar">
    <a class="pin" href="#" aria-label="Start"><svg class="orb" viewBox="0 0 36 36"><circle cx="18" cy="18" r="17" fill="url(#g-orb)" stroke="#bcd9e8"/><path d="M9 11c3-2 6-2 9 0l-1 7c-3-2-6-2-9 0z" fill="#ef6328"/><path d="M19 12c3 2 6 2 9 0l-1 7c-3 2-6 2-9 0z" fill="#8ac83a"/><path d="M8 19c3-2 6-2 9 0l-1 7c-3-2-6-2-9 0z" fill="#43a8e8"/><path d="M18 20c3 2 6 2 9 0l-1 7c-3 2-6 2-9 0z" fill="#fbc92c"/></svg></a>
    <a class="pin" href="#" aria-label="Launcher"><svg viewBox="0 0 32 32"><path d="M14 15C4 16 0 10 5 4c5-5 13 1 9 11z" fill="#a6d022"/><path d="M17 15C16 5 21 0 27 4c5 5 0 13-10 11z" fill="#2f86e8"/><path d="M14 17c1 10-3 15-9 12-6-5 0-13 9-12z" fill="#fcc419"/><path d="M17 17c10-1 15 4 11 10-5 5-13 0-11-10z" fill="#e8482c"/></svg></a>
    <a class="pin" href="#" aria-label="Search"><svg viewBox="0 0 32 32"><circle cx="15" cy="14" r="10" fill="none" stroke="#4aa0f8" stroke-width="4"/><path d="M22 22l6 7" stroke="#4aa0f8" stroke-width="5"/></svg></a>
    <button aria-label="Presentation"><svg viewBox="0 0 32 32"><path d="M16 5h14v22H16z" fill="#fff" stroke="#d24726"/><path d="M20 17h8M20 21h8" stroke="#d24726" stroke-width="2"/><circle cx="23" cy="11" r="4" fill="#d24726"/><path d="M1 4l18-4v32L1 28z" fill="#d24726"/><text x="5" y="22" font-size="17" font-weight="bold" fill="#fff">P</text></svg></button>
    <button aria-label="Recorder"><svg viewBox="0 0 32 32"><circle cx="16" cy="16" r="15" fill="#0a0a0a" stroke="#ccc"/><circle cx="16" cy="16" r="9" fill="#e80c14"/></svg></button>
    <button aria-label="Editor"><svg viewBox="0 0 32 32"><path d="M1 1h30v30H1z" fill="#4b4b4b"/><path d="M8 11l16-5v6l-10 3 10 3v5L8 27v-6l10-3-10-3z" fill="#ff9a00"/></svg></button>
    <button aria-label="Viewer"><svg viewBox="0 0 32 32"><path d="M16 5h14v22H16z" fill="#fff" stroke="#b01820"/><path d="M20 21h8M20 17l7-8" stroke="#b01820" stroke-width="2"/><path d="M1 4l18-4v32L1 28z" fill="#b01820"/><text class="serif" x="4" y="23" font-size="19" font-weight="bold" fill="#fff">P</text></svg></button>
    <button aria-label="Modeler"><svg><use href="#t-app"/></svg></button>
    <button class="current-app" aria-label="Modeler window"><svg><use href="#t-app"/></svg></button>
    <button aria-label="Pictures"><svg viewBox="0 0 32 32"><path d="M3 4h26v22H3z" fill="#7cc3ea" stroke="#fff"/><path d="M3 17l8-4 8 4 10-3v12H3z" fill="#2b5c48"/><path d="M3 20h26v6H3z" fill="#bfe0ee"/><path d="M1 7V1h6M25 1h6v6M1 24v6h6M31 24v6h-6" fill="none" stroke="#2a72c0" stroke-width="2.500"/></svg></button>

    <div class="tray">
      <svg class="kbd" viewBox="0 0 16 16"><path d="M1 6h14v8H1z" fill="#e8e8e8" stroke="#667"/><path d="M2 8h12M2 10h12M4 12h8" stroke="#667" stroke-dasharray="1 1"/><path d="M8 6c0-3 4-2 4-5" fill="none" stroke="#ccc"/></svg>
      <svg viewBox="0 0 16 16"><circle cx="9" cy="6" r="6" fill="#3f78d0"/><path d="M3 6l6 1 1-6c5 3 6 6 4 9l-3 5-5-1z" fill="#2fae2f"/><path d="M1 6l6 3-5 4z" fill="#f0d820"/><path d="M6 9h6l-3 6z" fill="#2fae2f"/></svg>
      <svg viewBox="0 0 16 16"><circle cx="8" cy="8" r="7" fill="#0a0a0a" stroke="#bbb"/><circle cx="8" cy="8" r="4.500" fill="#e80c14"/></svg>
      <svg viewBox="0 0 16 16"><ellipse cx="6" cy="6" rx="6" ry="5" fill="#28c445"/><ellipse cx="11" cy="11" rx="5" ry="4" fill="#fff"/><circle cx="9" cy="10" r="1" fill="#888"/><circle cx="13" cy="10" r="1" fill="#888"/></svg>
      <svg viewBox="0 0 16 16"><circle cx="8" cy="8" r="7.500" fill="#f2cc0c"/><path d="M8 4v8M4 8h8" stroke="#187a20" stroke-width="2.500"/></svg>
      <svg viewBox="0 0 16 16"><path d="M2 1h5v4H2zM1 5h7v6l-2 4H3l-2-4z" fill="#9aa4a8"/><circle cx="11" cy="11" r="5" fill="#27a832"/><path d="M8 11l2 2 4-4" fill="none" stroke="#fff" stroke-width="1.500"/></svg>
      <svg viewBox="0 0 16 16"><path d="M0 1h16v14H0z" fill="#1c1f10"/><path d="M2 8c3-5 9-5 11 0-3 4-8 4-11 0z" fill="none" stroke="#86c010" stroke-width="1.500"/><circle cx="8" cy="8" r="2" fill="#86c010"/><path d="M12 8h3v7h-3z" fill="#f0c80c"/></svg>
      <svg viewBox="0 0 16 16"><path d="M0 5h4l6-5v16l-6-5H0z" fill="#d85038" stroke="#fff" stroke-width=".5"/><path d="M12 4c2 3 2 5 0 8M14 2c3 4 3 8 0 12" fill="none" stroke="#e8a898"/></svg>
      <svg viewBox="0 0 16 16"><path d="M2 12v2M5 10v4M8 7v7M11 5v9M14 2v12" stroke="#fff" stroke-width="2"/></svg>
      <svg viewBox="0 0 16 16"><path d="M3 5h3l5-4v14l-5-4H3z" fill="#fff"/></svg>
    </div>
    <div class="clock">11:40 周六<br>2021/1/2</div>
    <div class="notes">
      <svg viewBox="0 0 20 20"><path d="M1 1h18v18H1z" fill="#fff"/><path d="M4 5h4v4H4zM10 5h6M10 8h6M4 12h12M4 15h9" fill="none" stroke="#345" stroke-width="1.500"/></svg>
      <span>2</span>
    </div>
    <button class="show-desktop" aria-label="Show desktop"></button>
  </footer>

  <div class="dialog field-dialog" role="dialog" aria-label="Edit Predefined Field">
    <div class="dialog-title">
      <svg><use href="#t-app"/></svg><span>Edit Predefined Field</span>
      <button class="close" aria-label="Close"><svg viewBox="0 0 12 12"><path d="M2 2l8 8M10 2l-8 8" stroke="#fff" stroke-width="2.500"/></svg></button>
    </div>
    <div class="dialog-body">
      <dl class="facts">
        <dt>Name:</dt><dd>Predefined Field-1</dd>
        <dt>Type:</dt><dd>Temperature</dd>
        <dt>Step:</dt><dd>Step-1 (Static, General)</dd>
        <dt>Region:</dt><dd>Set-3</dd>
      </dl>
      <hr>
      <form class="fields">
        <label for="dist">Distribution:</label>
        <div class="cell"><span class="combo w-dist"><select id="dist"><option>Direct specification</option></select><i></i></span><span class="fx">f(x)</span></div>
        <label for="sect">Section variation:</label>
        <div class="cell"><span class="combo w-sect"><select id="sect"><option>Constant through region</option></select><i></i></span></div>
        <label for="mag">Magnitude:</label>
        <div class="cell"><input id="mag" type="text" value="1"></div>
        <label for="amp">Amplitude:</label>
        <div class="cell"><span class="combo w-amp"><select id="amp"><option>(Ramp)</option></select><i></i></span><svg class="ico amp-ico"><use href="#t-amp"/></svg></div>
      </form>
      <div class="actions"><button class="push">OK</button><button class="push">Cancel</button></div>
    </div>
  </div>

  <div class="dialog amp-dialog" role="dialog" aria-label="Edit Amplitude">
    <div class="dialog-title">
      <svg><use href="#t-app"/></svg><span>Edit Amplitude</span>
      <button class="close red-close" aria-label="Close"><svg viewBox="0 0 12 12"><path d="M2 2l8 8M10 2l-8 8" stroke="#fff" stroke-width="2.500"/></svg></button>
    </div>
    <div class="dialog-body">
      <dl class="facts">
        <dt>Name:</dt><dd>Amp-1</dd>
        <dt>Type:</dt><dd>Tabular</dd>
      </dl>
      <hr>
      <div class="span-row">
        <label for="span">Time span:</label>
        <span class="combo w-span"><select id="span"><option>Step time</option></select><i></i></span>
      </div>
      <div class="smooth">
        <span>Smoothing:</span>
        <label><input type="radio" name="smooth" checked>Use solver default</label>
        <label class="second"><input type="radio" name="smooth">Specify:<input class="spec" type="text" aria-label="Smoothing value" disabled></label>
      </div>
      <div class="tabs">
        <button class="tab active">Amplitude Data</button>
        <button class="tab">Baseline Correction</button>
      </div>
      <div class="tab-panel">
        <div class="sheet">
          <table>
            <thead><tr><th class="num"></th><th class="freq">Time/Frequency</th><th>Amplitude</th></tr></thead>
            <tbody>
              <tr><th class="num">1</th><td><input type="text" aria-label="Time 1"></td><td></td></tr>
              <tr><th class="num">2</th><td></td><td></td></tr>
            </tbody>
          </table>
        </div>
      </div>
      <div class="actions"><button class="push">OK</button><button class="push">Cancel</button></div>
    </div>
  </div>

</body>
</html>
```
FILE: styles.css
```css
* {
  box-sizing: border-box;
}
body {
  margin: 0;
  height: 100vh;
  display: flex;
  flex-direction: column;
  overflow: hidden;
  position: relative;
  font-family: "Noto Sans", "Noto Sans CJK SC", sans-serif;
  font-size: 12px;
  line-height: 16px;
  color: #111;
  background: #f0f0f0;
}
button, select, input {
  font: inherit;
  color: inherit;
  margin: 0;
  padding: 0;
}
button {
  border: none;
  background: none;
}
svg {
  overflow: visible;
}
.sprite {
  position: absolute;
  width: 0;
  height: 0;
}
.serif {
  font-family: "Liberation Serif", serif;
  font-weight: bold;
}
.red {
  fill: #a8131c;
}
.white {
  fill: #fff;
}
.ico {
  width: 16px;
  height: 16px;
  flex: none;
}

/* window title */
.title-bar {
  flex: none;
  height: 22px;
  display: flex;
  justify-content: space-between;
  border-bottom: 1px solid #16386e;
  background:
    radial-gradient(circle 22px at 1252px 18px, #c5d9f5 40%, transparent 90%),
    radial-gradient(circle 24px at 1552px 28px, #c4ecf8 45%, transparent 90%),
    radial-gradient(circle 24px at 1627px 28px, #c8ecd8 45%, transparent 90%),
    radial-gradient(circle 24px at 1706px 28px, #b5dcf5 45%, transparent 90%),
    radial-gradient(circle 24px at 1782px 28px, #b5dcf5 45%, transparent 90%),
    radial-gradient(circle 24px at 1858px 28px, #cdeed8 45%, transparent 90%),
    linear-gradient(90deg, #3a67b4, #2456a4 50%, #17479a 65%, #124596 90%, #2a5cae);
}
.recorder {
  width: 350px;
  display: flex;
  align-items: center;
  gap: 10px;
  padding: 0 12px 0 7px;
  color: #e8e8e8;
  background: repeating-linear-gradient(135deg, #111 0 2px, #2c2c2c 2px 4px);
}
.rec-icon {
  width: 12px;
  height: 12px;
  flex: none;
}
.rec-icon + .rec-icon + span {
  margin-left: -2px;
}
.rec-state {
  margin: 0 auto;
  white-space: nowrap;
}
.rec-caret {
  width: 10px;
  height: 6px;
  flex: none;
}
.rec-cam {
  width: 14px;
  height: 12px;
  flex: none;
}
.win-buttons {
  display: flex;
  height: 18px;
  margin-right: 3px;
  border: 1px solid #7d9fd0;
  border-top: none;
  border-radius: 0 0 4px 4px;
}
.win-buttons button {
  width: 28px;
  border-right: 1px solid #7d9fd0;
}
.win-buttons .wide {
  width: 46px;
  border-right: none;
}
.win-buttons svg {
  width: 10px;
  height: 10px;
}

/* menu */
.menu-bar {
  flex: none;
  height: 27px;
  display: flex;
  align-items: center;
  gap: 16px;
  padding: 1px 4px 0;
  border-bottom: 1px solid #b4b4b4;
  background: linear-gradient(90deg, #fff, #f0f0f0);
}
.menu-bar a {
  color: #111;
  text-decoration: none;
}
.menu-bar u {
  text-underline-offset: 2px;
}
.menu-logo {
  width: 14px;
  height: 14px;
  margin-right: -4px;
}
.whats-this {
  width: 14px;
  height: 14px;
}
.mdi-buttons {
  margin-left: auto;
  display: flex;
  gap: 5px;
}
.mdi-buttons button {
  width: 15px;
  height: 13px;
  display: flex;
  justify-content: center;
  border: 1px solid #9fb6cc;
  background: #dce9f5;
}
.mdi-buttons svg {
  width: 11px;
  height: 11px;
}

/* toolbars */
.toolbar {
  flex: none;
  height: 28px;
  display: flex;
  background: linear-gradient(90deg, #f8f8f8, #f0f0f0);
}
.group {
  display: flex;
  align-items: center;
  border-right: 1px solid #b4b4b4;
  border-bottom: 1px solid #b4b4b4;
  background: linear-gradient(#fff, #efefef);
}
.group::before {
  content: "";
  width: 2px;
  height: 16px;
  margin: 0 3px;
  background: repeating-linear-gradient(#999 0 2px, transparent 2px 5px);
}
.group.no-grip::before {
  display: none;
}
.group button {
  width: 26px;
  height: 26px;
  display: flex;
  align-items: center;
  justify-content: center;
}
.group svg {
  width: 22px;
  height: 22px;
}
.axes text {
  fill: #c8281e;
  font-size: 9px;
  font-weight: bold;
}
.group .digit {
  font-family: "Liberation Sans", sans-serif;
  font-size: 18px;
  font-weight: bold;
  color: #c8281e;
}
.group .hanzi {
  font-size: 20px;
}
.group .faded {
  color: #aaa;
}
.group .undo {
  color: #c8402c;
}
.group .sep-left {
  border-left: 1px solid #aaa;
}
.group .caret {
  width: 12px;
}
.caret::after {
  content: "";
  border: 4px solid transparent;
  border-top-color: #000;
  border-bottom: none;
}
.group.render {
  margin-left: auto;
  margin-right: 259px;
}

/* drop-downs */
.combo {
  display: inline-flex;
  align-items: center;
  height: 24px;
  padding: 1px;
  border: 1px solid #a8a8a8;
  background: #fff;
}
.combo select {
  flex: 1;
  min-width: 0;
  height: 100%;
  padding-left: 2px;
  border: none;
  background: none;
  appearance: none;
}
.combo i {
  width: 11px;
  height: 100%;
  display: flex;
  align-items: center;
  justify-content: center;
  border: 1px solid #777;
  background: linear-gradient(#f6f6f6, #bdbdbd);
}
.combo i::after {
  content: "";
  border: 4px solid transparent;
  border-top-color: #000;
  border-bottom: none;
}
.combo.dark {
  padding: 0;
  border-color: #666;
}
.combo em {
  width: 9px;
  height: 18px;
  margin-left: 2px;
  border: 1px solid #c8c8c8;
  background:
    linear-gradient(#7080b8, #7080b8) 2px 4px / 3px 2px no-repeat,
    linear-gradient(#7080b8, #7080b8) 2px 10px / 3px 2px no-repeat,
    #f4f4f4;
}
.combo-off {
  width: 115px;
  background: #b3cfec;
}
.combo-off select {
  opacity: 1;
  color: #222;
}
.combo-off i {
  opacity: .5;
}
.combo-color {
  width: 143px;
}
.w-module {
  width: 111px;
}
.w-model {
  width: 97px;
}
.w-step {
  width: 97px;
}
.w-dist {
  width: 338px;
}
.w-sect {
  width: 268px;
}
.w-amp {
  width: 144px;
}
.w-span {
  width: 82px;
}

/* model tree */
.workspace {
  flex: 1;
  min-height: 0;
  display: flex;
  gap: 7px;
  background: #fafafa;
}
.side {
  width: 377px;
  flex: none;
  display: flex;
  flex-direction: column;
  padding: 7px 0 6px 2px;
  background: #fff;
}
.tabs {
  display: flex;
  align-items: flex-end;
  margin-bottom: -1px;
}
.tab {
  height: 23px;
  padding: 0 7px;
  border: 1px solid #888;
  border-left: none;
  background: linear-gradient(#f4f4f4, #d4d4d4);
}
.tab.active {
  height: 25px;
  padding: 0 8px;
  border-left: 1px solid #888;
  border-bottom-color: #fff;
  background: #fff;
}
.side-panel {
  flex: 1;
  min-height: 0;
  display: flex;
  flex-direction: column;
  gap: 3px;
  padding: 6px 0 0 2px;
  border: 1px solid #999;
  border-bottom: none;
}
.db-row {
  display: flex;
  align-items: center;
  gap: 10px;
}
.combo.db {
  width: 276px;
  padding-left: 2px;
}
.spin {
  width: 9px;
  height: 16px;
}
.tree {
  flex: 1;
  min-height: 0;
  padding: 0 0 0 2px;
  border: 1px solid #999;
  background: #fff;
}
.tree ul {
  list-style: none;
  margin: 0;
  padding: 0;
  background: linear-gradient(#999 50%, transparent 50%) 4px 0 / 1px 2px repeat-y;
}
.tree ul ul {
  margin-left: 18px;
}
.tree li:last-child {
  background: linear-gradient(#fff, #fff) 0 11px no-repeat;
}
.row {
  height: 21px;
  display: flex;
  align-items: center;
  white-space: nowrap;
}
.row .ico {
  margin: 0 6px 0 3px;
}
.tog {
  width: 9px;
  height: 9px;
  flex: none;
  border: 1px solid #8f96a3;
  background:
    linear-gradient(#223a7a, #223a7a) center / 5px 1px no-repeat,
    linear-gradient(#223a7a, #223a7a) center / 1px 5px no-repeat,
    #fff;
}
.tog.minus {
  background: linear-gradient(#223a7a, #223a7a) center / 5px 1px no-repeat, #fff;
}
.stub {
  width: 5px;
  height: 1px;
  margin-left: 4px;
  background: repeating-linear-gradient(90deg, #999 0 1px, transparent 1px 2px);
}
.current {
  margin-left: 5px;
  line-height: 15px;
  border-bottom: 2px solid #000;
}

/* module bar and viewport */
.canvas {
  flex: 1;
  min-width: 0;
  display: flex;
  flex-direction: column;
}
.module-bar {
  height: 32px;
  display: flex;
  align-items: center;
  gap: 6px;
  padding: 0 6px;
  background: linear-gradient(#fff, #ececec);
}
.module-bar .combo + label {
  margin-left: 9px;
}
.stage {
  flex: 1;
  min-height: 0;
  display: flex;
}
.toolbox {
  width: 60px;
  display: flex;
  align-items: flex-start;
  gap: 8px;
  padding: 8px 5px;
  background: linear-gradient(90deg, #fff, #f0f0f0);
}
.toolbox svg {
  width: 20px;
  height: 20px;
}
.viewport {
  flex: 1;
  position: relative;
  background: linear-gradient(#1b2d45, #20334d 15%, #33465f 40%, #51637b 60%, #7d8ea5 80%, #a2b0c7);
  font-family: "Liberation Sans", sans-serif;
}
.compass {
  position: absolute;
  top: 10px;
  right: 49px;
  width: 62px;
  height: 82px;
}
.axes-mark {
  position: absolute;
  left: 898px;
  top: 212px;
  width: 60px;
  height: 96px;
}
.mark-names {
  font-family: "Liberation Serif", serif;
}
.triad {
  position: absolute;
  left: 58px;
  bottom: 27px;
  width: 90px;
  height: 96px;
}
.prompt-bar {
  height: 38px;
  display: flex;
  align-items: center;
  gap: 4px;
  padding: 0 3px 4px 5px;
  background: linear-gradient(#fff, #e9e9e9);
}
.prompt-bar button {
  width: 18px;
  height: 22px;
  display: flex;
  align-items: center;
  justify-content: center;
  border: 1px solid #777;
  border-radius: 3px;
  background: linear-gradient(#fff, #ddd);
}
.prompt-bar button svg {
  width: 14px;
  height: 14px;
}
.prompt-bar > span {
  margin-left: 3px;
}
.brand {
  margin-left: auto;
  display: flex;
  align-items: center;
  gap: 6px;
  font-family: "DejaVu Sans", sans-serif;
  font-size: 18px;
  font-style: italic;
  color: #1aa596;
}
.brand svg {
  width: 21px;
  height: 24px;
}

/* message area */
.messages {
  flex: none;
  height: 139px;
  display: flex;
  position: relative;
  padding: 0 18px 4px 2px;
  background: #f6f6f6;
}
.msg-tabs {
  width: 37px;
}
.msg-tabs button {
  width: 37px;
  height: 37px;
  display: flex;
  align-items: center;
  justify-content: center;
  border: 1px solid #aaa;
  border-right: none;
  background: #e2e2e2;
}
.msg-tabs .active {
  background: #fff;
}
.msg-tabs svg {
  width: 24px;
  height: 24px;
}
.log {
  flex: 1;
  min-width: 0;
  padding: 2px 5px;
  border: 1px solid #888;
  border-width: 2px 0 1px 2px;
  background: #fff;
  font-family: "Liberation Mono", "Noto Sans CJK SC", monospace;
  font-size: 13px;
  line-height: 13px;
  white-space: nowrap;
  overflow: hidden;
  color: #000;
}
.log p {
  margin: 0;
  height: 13px;
}
.scrollbar {
  width: 18px;
  display: flex;
  flex-direction: column;
  align-items: center;
  padding: 8px 1px;
  border: 1px solid #888;
  border-width: 2px 1px 1px 0;
  background: #f0f0f0;
}
.scrollbar .up {
  border: 3px solid transparent;
  border-top: none;
  border-bottom-color: #333;
}
.scrollbar .down {
  border: 3px solid transparent;
  border-bottom: none;
  border-top-color: #333;
}
.scrollbar .thumb {
  flex: 1;
  width: 15px;
  margin: 16px 0 8px;
  border: 1px solid #999;
  border-radius: 2px;
  background:
    repeating-linear-gradient(#555 0 1px, transparent 1px 3px) center / 7px 9px no-repeat,
    linear-gradient(90deg, #f8f8f8, #c8c8c8);
}
.meter {
  position: absolute;
  right: 2px;
  bottom: 10px;
  width: 8px;
  height: 58px;
  border-radius: 4px;
  background: linear-gradient(#555 85%, #3c8f5a);
}
.net-tip {
  position: absolute;
  right: 77px;
  bottom: 0;
  padding: 2px 4px 1px;
  border: 1px solid #767676;
  border-bottom: none;
  border-radius: 2px 2px 0 0;
  background: linear-gradient(#fff, #e4e5f0);
  box-shadow: 3px 0 3px rgba(0, 0, 0, .4);
  color: #555;
  line-height: 17px;
}

/* taskbar */
.taskbar {
  flex: none;
  height: 40px;
  display: flex;
  align-items: center;
  gap: 4px;
  border-top: 1px solid #274b58;
  background:
    radial-gradient(ellipse 60px 16px at 950px 14px, #2f7285, transparent),
    radial-gradient(ellipse 80px 20px at 1010px 30px, #69b0bd, transparent),
    radial-gradient(ellipse 90px 20px at 1420px 22px, #5c9fae, transparent),
    linear-gradient(90deg, #2f5f70, #376b7a 30%, #478c9d 45%, #4f96a6 60%, #5a98aa 75%, #5a7f88 85%, #64868c);
}
.taskbar .pin {
  width: 54px;
  display: flex;
  justify-content: center;
}
.pin svg {
  width: 30px;
  height: 30px;
}
.taskbar .orb {
  width: 37px;
  height: 37px;
}
.taskbar button {
  width: 58px;
  height: 39px;
  display: flex;
  align-items: center;
  justify-content: center;
  border: 1px solid #1f4452;
  border-radius: 3px;
  box-shadow: inset 0 0 0 1px rgba(255, 255, 255, .4);
  background: linear-gradient(120deg, rgba(255, 255, 255, .5), rgba(255, 255, 255, .15));
}
.taskbar .pin + button {
  margin-left: 6px;
}
.taskbar button svg {
  width: 30px;
  height: 32px;
}
.taskbar .current-app {
  background: rgba(255, 255, 255, .6);
}
.tray {
  margin-left: auto;
  display: flex;
  align-items: center;
  gap: 8px;
}
.tray svg {
  width: 16px;
  height: 16px;
}
.tray .kbd {
  margin-right: 6px;
}
.clock {
  width: 86px;
  text-align: center;
  color: #fff;
  line-height: 17px;
}
.notes {
  position: relative;
  width: 30px;
  display: flex;
}
.notes svg {
  width: 18px;
  height: 20px;
}
.notes span {
  position: absolute;
  left: 10px;
  top: 8px;
  width: 14px;
  height: 14px;
  line-height: 14px;
  text-align: center;
  color: #fff;
  font-size: 10px;
  background: #d8101c;
}
.taskbar .show-desktop {
  width: 14px;
  background: linear-gradient(rgba(255, 255, 255, .4), rgba(255, 255, 255, .1));
}

/* floating dialogs */
.dialog {
  position: absolute;
  display: flex;
  flex-direction: column;
  padding: 0 6px 6px;
  border: 1px solid #2a3340;
  border-radius: 7px;
}
.field-dialog {
  left: 387px;
  top: 177px;
  width: 527px;
  height: 467px;
  box-shadow: inset 0 0 0 1px rgba(255, 255, 255, .6), 0 2px 10px rgba(0, 0, 0, .5);
  background: linear-gradient(90deg, #f4fafd, #d8edf6 50px, #4f6580 62px, #3d536f 160px, #243a57 300px, #2f4563 420px, #50637d);
}
.amp-dialog {
  left: 900px;
  top: 355px;
  width: 454px;
  height: 670px;
  box-shadow: inset 0 0 0 1px rgba(255, 255, 255, .6), 0 4px 18px rgba(0, 0, 0, .8);
  background:
    linear-gradient(90deg, #7d8896, #8692a0 120px, #2c415b 160px, #22374f 260px, #7b8997 90%) 0 0 / 100% 28px no-repeat,
    linear-gradient(#5c6d82, #a8b6c4 26%, #b5d3f0 28%, #5a7695 42%, #6683a4 72%, #b9d6f3 78%);
}
.dialog-title {
  flex: none;
  height: 27px;
  display: flex;
  align-items: center;
  gap: 5px;
}
.dialog-title > svg {
  width: 16px;
  height: 16px;
}
.dialog-title span {
  color: #000;
  text-shadow: 0 0 6px rgba(255, 255, 255, .7), 0 0 12px rgba(255, 255, 255, .6);
}
.close {
  align-self: flex-start;
  margin-left: auto;
  width: 48px;
  height: 19px;
  border: 1px solid #a8b4c4;
  border-top: none;
  border-radius: 0 0 4px 4px;
}
.close svg {
  width: 10px;
  height: 10px;
}
.red-close {
  background: linear-gradient(#d99a8c, #c24a38 50%, #b02a18 52%, #d4705c);
}
.dialog-body {
  flex: 1;
  min-height: 0;
  display: flex;
  flex-direction: column;
  padding: 2px 5px 5px 4px;
  border: 1px solid #3c4654;
  background: linear-gradient(90deg, #fff, #f0f0f0);
}
.facts {
  display: grid;
  grid-template-columns: 52px 1fr;
  grid-auto-rows: 25px;
  align-items: center;
  margin: 0;
  padding-left: 1px;
}
.facts dd {
  margin: 0;
}
.amp-dialog .facts {
  grid-template-columns: 46px 1fr;
}
hr {
  width: 100%;
  margin: 3px 0 5px;
  border: none;
  border-top: 1px solid #999;
}
.fields {
  display: grid;
  grid-template-columns: 131px 1fr;
  grid-auto-rows: 24px;
  row-gap: 5px;
  align-items: center;
  padding-left: 1px;
}
.cell {
  display: flex;
  align-items: center;
  justify-content: flex-start;
}
.fx {
  align-self: flex-start;
  margin-left: 16px;
  font-family: "Liberation Sans", sans-serif;
  font-style: italic;
  font-weight: bold;
}
.amp-ico {
  margin-left: 17px;
}
.cell input {
  width: 148px;
  height: 24px;
  padding: 0 4px;
  border: 1px solid #a8a8a8;
  background: #fff;
}
.actions {
  display: flex;
}
.field-dialog .actions {
  margin-top: auto;
  padding: 6px 94px 0 96px;
  border-top: 1px solid #999;
  justify-content: space-between;
}
.amp-dialog .actions {
  padding: 11px 77px 0;
  justify-content: space-between;
}
.push {
  width: 56px;
  height: 23px;
  border: 1px solid #707070;
  border-radius: 3px;
  background: linear-gradient(#fdfdfd, #eee 50%, #d4d4d4);
}
.span-row {
  display: flex;
  align-items: center;
  gap: 4px;
  padding-left: 1px;
}
.smooth {
  display: grid;
  grid-template-columns: 74px 1fr;
  grid-auto-rows: 27px;
  align-items: center;
  margin: 1px 0 4px;
  padding-left: 1px;
}
.smooth label {
  display: flex;
  align-items: center;
}
.smooth .second {
  grid-column: 2;
}
.smooth input[type="radio"] {
  width: 12px;
  height: 12px;
  margin-right: 5px;
  appearance: none;
  border: 1px solid #8a8a8a;
  border-radius: 50%;
  background: radial-gradient(#ddd, #fff);
}
.smooth input[type="radio"]:checked {
  background: radial-gradient(#3aa0c8 0 1px, #123c5c 3px, #eee 5px);
}
.smooth .spec {
  width: 71px;
  height: 24px;
  margin-left: 4px;
  border: 1px solid #a8a8a8;
  background: #b3cfec;
}
.tab-panel {
  flex: 1;
  min-height: 0;
  padding: 5px 4px 4px;
  border: 1px solid #888;
  background: #fff;
}
.sheet {
  height: 100%;
  padding: 1px;
  border: 1px solid #999;
}
.sheet table {
  width: 100%;
  border-collapse: collapse;
  table-layout: fixed;
}
.sheet th, .sheet td {
  height: 20px;
  padding: 0;
  border: 1px solid #eee;
  font-weight: bold;
  line-height: 16px;
}
.sheet thead th {
  background: linear-gradient(#fff, #f2f2f2);
}
.sheet .num {
  width: 14px;
}
.sheet .freq {
  width: 127px;
}
.sheet input {
  display: block;
  width: 100%;
  height: 19px;
  border: 1px solid #6a9bd6;
  background: #fff;
}
```
